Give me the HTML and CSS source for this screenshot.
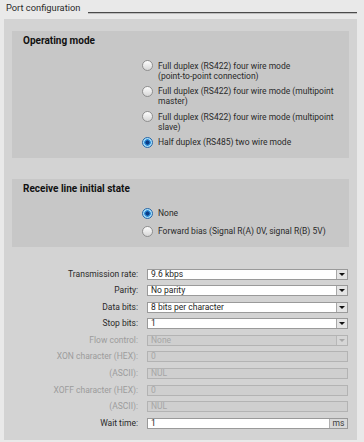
FILE: index.html
```html
<!DOCTYPE html>
<html lang="en">

<head>
    <meta charset="UTF-8">
    <meta name="viewport" content="width=device-width, initial-scale=1.0">
    <title>Port configuration</title>
    <link rel="stylesheet" href="styles.css">
</head>

<body>
    <div class="section-head">
        <span class="section-title">Port configuration</span>
        <div class="section-rule"></div>
    </div>

    <div class="panel">
        <!-- Operating mode -->
        <section class="group">
            <h3>Operating mode</h3>
            <div class="options">
                <div class="option">
                    <span class="radio"></span>
                    <span class="option-text">Full duplex (RS422) four wire mode<br>(point-to-point connection)</span>
                </div>
                <div class="option">
                    <span class="radio"></span>
                    <span class="option-text">Full duplex (RS422) four wire mode (multipoint<br>master)</span>
                </div>
                <div class="option">
                    <span class="radio"></span>
                    <span class="option-text">Full duplex (RS422) four wire mode (multipoint<br>slave)</span>
                </div>
                <div class="option">
                    <span class="radio checked"></span>
                    <span class="option-text">Half duplex (RS485) two wire mode</span>
                </div>
            </div>
        </section>

        <!-- Receive line initial state -->
        <section class="group group-receive">
            <h3>Receive line initial state</h3>
            <div class="options">
                <div class="option">
                    <span class="radio checked"></span>
                    <span class="option-text">None</span>
                </div>
                <div class="option">
                    <span class="radio"></span>
                    <span class="option-text">Forward bias (Signal R(A) 0V, signal R(B) 5V)</span>
                </div>
            </div>
        </section>

        <!-- Port parameters -->
        <div class="form">
            <span class="label">Transmission rate:</span>
            <div class="field"><span class="value">9.6 kbps</span><span class="drop"></span></div>

            <span class="label">Parity:</span>
            <div class="field"><span class="value">No parity</span><span class="drop"></span></div>

            <span class="label">Data bits:</span>
            <div class="field"><span class="value">8 bits per character</span><span class="drop"></span></div>

            <span class="label">Stop bits:</span>
            <div class="field"><span class="value">1</span><span class="drop"></span></div>

            <span class="label disabled">Flow control:</span>
            <div class="field disabled"><span class="value">None</span><span class="drop"></span></div>

            <span class="label disabled">XON character (HEX):</span>
            <div class="field disabled"><span class="value">0</span></div>

            <span class="label disabled">(ASCII):</span>
            <div class="field disabled"><span class="value">NUL</span></div>

            <span class="label disabled">XOFF character (HEX):</span>
            <div class="field disabled"><span class="value">0</span></div>

            <span class="label disabled">(ASCII):</span>
            <div class="field disabled"><span class="value">NUL</span></div>

            <span class="label">Wait time:</span>
            <div class="field"><span class="value">1</span><span class="unit">ms</span></div>
        </div>
    </div>
</body>

</html>
```

FILE: styles.css
```css
/* Basic Styles */
body {
    margin: 0;
    background-color: #e9e9e9;
    font-family: Roboto, "Liberation Sans", sans-serif;
    font-size: 8.5px;
    color: #1e1e1e;
}

/* Section header with rule */
.section-head {
    display: flex;
    height: 19px;
    padding: 0 7px 0 6px;
}

.section-title {
    font-size: 9.3px;
    line-height: 15px;
    color: #2a2a2a;
}

.section-rule {
    flex: 1;
    height: 1px;
    margin: 12px 0 0 8px;
    background-color: #4a4a4a;
    box-shadow: 0 1px 0 #bdbdbd;
}

.panel {
    margin: 0 7px 2px 4px;
    padding: 12px 8px 11px 8px;
    background-color: #d3d3d3;
}

/* Group boxes */
.group {
    padding: 4px 11px 8px 11px;
    background-color: #c7c7c7;
}

.group-receive {
    margin-top: 21px;
}

.group h3 {
    margin: 0;
    font-size: 10px;
    line-height: 11px;
    font-weight: bold;
    color: #111;
}

.options {
    display: flex;
    flex-direction: column;
    gap: 5px;
    margin: 14px 0 0 119px;
}

.option {
    display: flex;
    align-items: flex-start;
    gap: 5px;
    min-height: 13px;
}

.option-text {
    line-height: 10px;
    margin-top: 0.5px;
    color: #2a2a2a;
}

.radio {
    flex: none;
    width: 11px;
    height: 11px;
    box-sizing: border-box;
    border: 1px solid #8f8f8f;
    border-radius: 50%;
    background: linear-gradient(#fdfdfd, #d6d6d6);
}

.radio.checked {
    border-color: #2767a8;
    background: radial-gradient(circle, #0c3d86 0 1.8px, #2f8fdb 2.4px 3px, #a6dcf8 3.6px);
}

/* Parameter form */
.form {
    display: grid;
    grid-template-columns: 126px 201px;
    column-gap: 9px;
    row-gap: 5.6px;
    margin-top: 22px;
}

.label {
    text-align: right;
    line-height: 11px;
    color: #2a2a2a;
}

.label.disabled {
    color: #9c9c9c;
}

.field {
    display: flex;
    height: 11px;
    box-sizing: border-box;
    border: 1px solid #9a9a9a;
    background-color: #fff;
}

.field .value {
    flex: 1;
    padding-left: 3px;
    line-height: 9px;
    color: #1e1e1e;
}

.field.disabled {
    border-color: #b3b3b3;
    background-color: #cfcfcf;
}

.field.disabled .value {
    color: #a6a6a6;
}

.drop {
    position: relative;
    width: 10px;
    border-left: 1px solid #a8a8a8;
    background-color: #e4e4e4;
}

.drop::after {
    content: "";
    position: absolute;
    left: 2px;
    top: 3px;
    border-left: 3px solid transparent;
    border-right: 3px solid transparent;
    border-top: 3px solid #111;
}

.field.disabled .drop {
    border-left-color: #b8b8b8;
    background-color: #d6d6d6;
}

.field.disabled .drop::after {
    border-top-color: #a8a8a8;
}

.unit {
    width: 17px;
    border-left: 1px solid #b0b0b0;
    background-color: #d9d9d9;
    line-height: 9px;
    text-align: center;
    color: #3a3a3a;
}
```
